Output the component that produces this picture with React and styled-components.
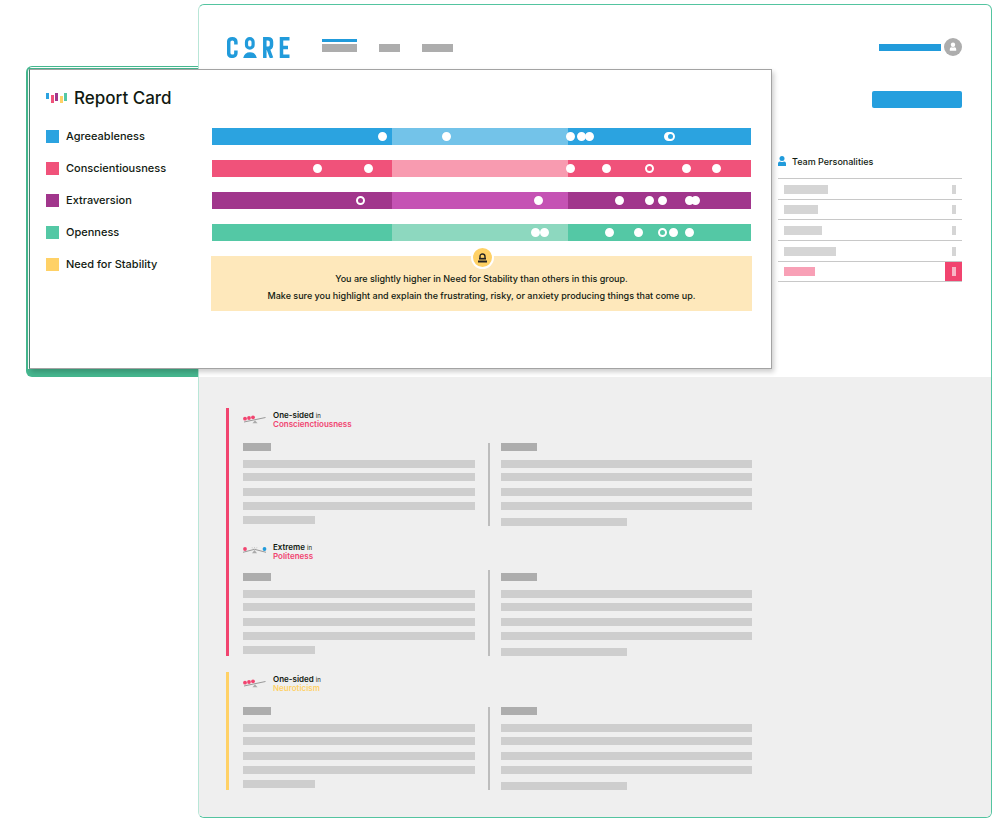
import React from "react"
import styled, { createGlobalStyle } from "styled-components"

const GlobalStyle = createGlobalStyle`
  * {
    box-sizing: border-box;
  }
  body {
    margin: 0;
    background-color: white;
    color: #111a11;
    font-family: Inter, "Liberation Sans", sans-serif;
  }
`

const Stage = styled.div`
  position: relative;
  padding: 4px 8px 14px 198px;
`

const Backing = styled.div`
  position: absolute;
  top: 66px;
  left: 26px;
  width: 190px;
  height: 311px;
  background: linear-gradient(#46b78f, #46b78f) 0 1px / 100% 1px no-repeat white;
  border: solid #46b78f;
  border-width: 1px 0 8px 2px;
  border-radius: 6px;
`

const Window = styled.div`
  position: relative;
  background-color: white;
  border: 1px solid #54c4a0;
  border-left-color: #b9e6d7;
  border-radius: 6px;
  overflow: hidden;
`

const Top = styled.div`
  min-height: 372px;
  padding: 31px 29px 0 28px;
`

const HeaderContainer = styled.header`
  display: flex;
  align-items: center;
  height: 22px;
`

const Nav = styled.nav`
  display: flex;
  gap: 22px;
  margin-left: 31px;
  padding-bottom: 3px;
`

const NavLink = styled.a`
  display: block;
  width: ${props => props.$width}px;
  height: 13px;
  border-top: 3px solid ${props => (props.$active ? "#219bdb" : "transparent")};
  background: linear-gradient(#adadad, #adadad) bottom / 100% 8px no-repeat;
`

const Account = styled.div`
  display: flex;
  align-items: center;
  gap: 3px;
  margin-left: auto;
`

const AccountLink = styled.a`
  width: 62px;
  height: 7px;
  background-color: #219bdb;
`

const Action = styled.button`
  display: block;
  width: 90px;
  height: 17px;
  margin: 33px 0 0 auto;
  padding: 0;
  border: 0;
  border-radius: 2px;
  background-color: #259fde;
`

const Team = styled.section`
  width: 184px;
  margin: 47px 0 0 auto;
`

const TeamTitle = styled.h2`
  display: flex;
  align-items: center;
  gap: 6px;
  height: 12px;
  margin: 0 0 11px;
  font-size: 9px;
  font-weight: 500;
`

const TeamList = styled.ul`
  list-style: none;
  margin: 0;
  padding: 0;
  border-bottom: 1px solid #c8c8c8;
`

const TeamRow = styled.li`
  display: flex;
  align-items: stretch;
  justify-content: space-between;
  height: 21px;
  padding-left: 6px;
  border-top: 1px solid #c8c8c8;

  &:nth-child(3n + 2) {
    height: 20px;
  }
`

const Bar = styled.span`
  display: block;
  align-self: center;
  width: ${props => props.$width}px;
  height: 9px;
  background-color: ${props => props.$color || "#d5d5d5"};
`

const Score = styled.span`
  display: flex;
  justify-content: center;
  width: 17px;
  background-color: ${props => (props.$active ? "#f1446f" : "transparent")};
`

const Card = styled.section`
  position: absolute;
  top: 69px;
  left: 29px;
  right: 228px;
  padding: 18px 19px 57px 16px;
  background-color: white;
  border: 1px solid #a3a3a3;
  border-left-color: #4a8070;
  box-shadow: 2px 3px 5px rgba(0, 0, 0, 0.2);
`

const CardTitle = styled.h1`
  display: flex;
  align-items: center;
  gap: 6px;
  height: 20px;
  margin: 0 0 12px;
  font-size: 17px;
  font-weight: 500;
`

const CardBody = styled.div`
  display: flex;
`

const Labels = styled.ul`
  list-style: none;
  width: 165px;
  margin: 0;
  padding: 0;
`

const Label = styled.li`
  display: flex;
  align-items: center;
  gap: 7px;
  height: 32px;
  font-size: 11px;
  font-weight: 500;

  &::before {
    content: "";
    width: 13px;
    height: 13px;
    background-color: ${props => props.$color};
  }
`

const Chart = styled.div`
  flex: 1;
`

const TrackRow = styled.div`
  display: flex;
  align-items: center;
  height: 32px;
  padding: 0 1px;
`

const Track = styled.div`
  position: relative;
  flex: 1;
  height: 17px;
  background: linear-gradient(
    to right,
    ${props => props.$color} 33.4%,
    ${props => props.$mid} 33.4% 66%,
    ${props => props.$color} 66%
  );
`

const Dot = styled.span`
  position: absolute;
  top: 4px;
  width: 9px;
  height: 9px;
  margin-left: -4px;
  border: 2px solid white;
  border-radius: 50%;
  background-color: ${props => props.$fill || "white"};
`

const Notice = styled.div`
  position: relative;
  margin-top: 8px;
  padding: 14px 0 7px;
  background-color: #fee8bb;
  font-size: 9px;
  font-weight: 500;
  line-height: 17px;
  text-align: center;

  p {
    margin: 0;
  }
`

const Badge = styled.span`
  position: absolute;
  top: -10px;
  left: 50%;
  display: flex;
  align-items: center;
  justify-content: center;
  width: 23px;
  height: 23px;
  margin-left: -11px;
  border: 2px solid white;
  border-radius: 50%;
  background-color: #ffd166;
`

const Details = styled.div`
  display: flex;
  flex-direction: column;
  gap: 16px;
  padding: 31px 239px 27px 27px;
  background-color: #efefef;
`

const Group = styled.section`
  display: flex;
  flex-direction: column;
  gap: 17px;
  padding: 3px 0 0 14px;
  border-left: 3px solid ${props => props.$color};
`

const TraitHeader = styled.header`
  display: flex;
  align-items: center;
  gap: 6px;
`

const TraitTitle = styled.h3`
  margin: 0;
  font-size: 8px;
  line-height: 9px;
  font-weight: 600;

  small {
    font-size: 6px;
    font-weight: 400;
  }
  span {
    display: block;
    color: ${props => props.$color};
  }
`

const Columns = styled.div`
  display: grid;
  grid-template-columns: 245fr 264fr;
  margin-top: ${props => (props.$tall ? 9 : 14)}px;

  > div {
    padding-top: ${props => (props.$tall ? 3 : 0)}px;
  }
`

const LeftColumn = styled.div`
  padding-right: 13px;
`

const RightColumn = styled.div`
  padding-left: 11px;
  border-left: 2px solid #bdbdbd;
`

const Line = styled.div`
  width: ${props => props.$width || "100%"};
  height: 8px;
  margin-top: ${props => props.$gap}px;
  background-color: ${props => (props.$head ? "#adadad" : "#cecece")};
`

const tracks = [
  { name: "Agreeableness", color: "#2ba3e0", mid: "#73c3e9", dots: [382, 446, 570, 581, 589, 668], self: 670 },
  { name: "Conscientiousness", color: "#f0527a", mid: "#f89bb0", dots: [317, 368, 570, 606, 686, 716], self: 649 },
  { name: "Extraversion", color: "#a1368c", mid: "#c553b4", dots: [538, 619, 649, 662, 689, 695], self: 360 },
  { name: "Openness", color: "#54c8a5", mid: "#8dd8bf", dots: [535, 544, 609, 638, 673, 689], self: 662 },
]

// scores run from 212 to 751 along a track
const place = score => ({ left: `${((score - 212) / 539) * 100}%` })

const Logo = () => (
  <svg width="64" height="22" viewBox="0 -1 64 22" fill="none" stroke="#219bdb" strokeWidth="3.5" role="img" aria-label="Core">
    <path d="M8.900 7.500V5Q8.900 1.700 5.300 1.700T1.700 5V16Q1.700 19.300 5.300 19.300T8.900 16V13.500" />
    <rect x="19.500" y="1.600" width="6.600" height="9.600" rx="3.300" strokeWidth="3.200" />
    <path d="M16.200 21Q17.500 15.200 23 15.200T29.800 21Z" fill="#219bdb" stroke="none" />
    <path d="M37.800 21V1.700H41Q44.500 1.700 44.500 5V8Q44.500 11.300 41 11.300H37.800M41 11.300L44.600 21" />
    <path d="M62.500 1.700H54.500V19.300H62.500M54.500 10.500H61" />
  </svg>
)

const Person = ({ size, color }) => (
  <svg width={size} height={size + 2} viewBox="0 0 8 10" fill={color} aria-hidden="true">
    <circle cx="4" cy="2.500" r="2.500" />
    <path d="M0 10V7.500Q0 5.500 2 5.500Q4 6.500 6 5.500Q8 5.500 8 7.500V10Z" />
  </svg>
)

const Avatar = () => (
  <svg width="18" height="18" viewBox="0 0 18 18" aria-hidden="true">
    <circle cx="9" cy="9" r="9" fill="#adadad" />
    <circle cx="9" cy="6.800" r="2.200" fill="white" />
    <path d="M5.800 12.800V11Q5.800 9.300 7.500 9.200Q9 10 10.500 9.200Q12.200 9.300 12.200 11V12.800Z" fill="white" />
  </svg>
)

const BarsIcon = () => (
  <svg width="22" height="10" viewBox="0 0 22 10" aria-hidden="true">
    <rect x="0" y="0" width="3" height="6" fill="#2ba3e0" />
    <rect x="5" y="2" width="3" height="8" fill="#f0527a" />
    <rect x="9" y="0" width="3" height="8" fill="#a1368c" />
    <rect x="14" y="3" width="3" height="7" fill="#ffd166" />
    <rect x="18" y="0" width="3" height="8" fill="#54c8a5" />
  </svg>
)

const StabilityIcon = () => (
  <svg width="9" height="10" viewBox="0 0 9 10" fill="none" stroke="#222" aria-hidden="true">
    <path d="M2 5V3.500Q2 1 4.500 1T7 3.500V5" strokeWidth="1.400" />
    <path d="M1 5.700H8" strokeWidth="1.700" />
    <path d="M0 8.500H9" strokeWidth="2" />
  </svg>
)

const OneSided = () => (
  <svg width="24" height="10" viewBox="0 0 24 10" aria-hidden="true">
    <path d="M1 7L22.500 2.500" stroke="#999" />
    <path d="M9.500 8.300L12 5.300L14.500 8.300Z" fill="#aaa" />
    <g fill="#f1446f">
      <circle cx="2" cy="3.700" r="1.900" />
      <circle cx="6" cy="3" r="1.900" />
      <circle cx="10" cy="2.300" r="1.900" />
    </g>
  </svg>
)

const Extreme = () => (
  <svg width="24" height="10" viewBox="0 0 24 10" aria-hidden="true">
    <path d="M0 5.300L11.500 2.300L23 5.300" stroke="#999" fill="none" />
    <path d="M9 6.300L11.500 3L14 6.300Z" fill="#aaa" />
    <path d="M11.500 0V1M9 .3L10 1.500M14 .3L13 1.500" stroke="#bbb" strokeWidth=".7" />
    <circle cx="2" cy="2" r="1.900" fill="#f1446f" />
    <circle cx="21.500" cy="2" r="1.900" fill="#219bdb" />
  </svg>
)

const Lines = ({ head, last, lastGap }) => (
  <>
    <Line $head $width={head} $gap={0} />
    <Line $gap={9} />
    <Line $gap={5} />
    <Line $gap={7} />
    <Line $gap={6} />
    <Line $width={last} $gap={lastGap} />
  </>
)

const Trait = ({ icon, kind, name, color, tall }) => (
  <article>
    <TraitHeader>
      {icon}
      <TraitTitle $color={color}>
        {kind} <small>in</small>
        <span>{name}</span>
      </TraitTitle>
    </TraitHeader>
    <Columns $tall={tall}>
      <LeftColumn>
        <Lines head="28px" last="31%" lastGap={6} />
      </LeftColumn>
      <RightColumn>
        <Lines head="36px" last="50%" lastGap={8} />
      </RightColumn>
    </Columns>
  </article>
)

const Header = () => (
  <HeaderContainer>
    <Logo />
    <Nav>
      <NavLink href="#report" aria-label="Report" $width={35} $active />
      <NavLink href="#team" aria-label="Team" $width={21} />
      <NavLink href="#settings" aria-label="Settings" $width={31} />
    </Nav>
    <Account>
      <AccountLink href="#account" aria-label="Account" />
      <Avatar />
    </Account>
  </HeaderContainer>
)

const TeamPersonalities = () => (
  <Team>
    <TeamTitle>
      <Person size={8} color="#219bdb" />
      Team Personalities
    </TeamTitle>
    <TeamList>
      {[44, 34, 38, 52].map(width => (
        <TeamRow key={width}>
          <Bar $width={width} />
          <Score><Bar $width={4} /></Score>
        </TeamRow>
      ))}
      <TeamRow>
        <Bar $width={31} $color="#f8a0b6" />
        <Score $active><Bar $width={4} $color="#f8b5c5" /></Score>
      </TeamRow>
    </TeamList>
  </Team>
)

const ReportCard = () => (
  <Card>
    <CardTitle>
      <BarsIcon />
      Report Card
    </CardTitle>
    <CardBody>
      <Labels>
        {tracks.map(track => (
          <Label key={track.name} $color={track.color}>{track.name}</Label>
        ))}
        <Label $color="#ffd166">Need for Stability</Label>
      </Labels>
      <Chart>
        {tracks.map(track => (
          <TrackRow key={track.name}>
            <Track $color={track.color} $mid={track.mid}>
              {track.dots.map(score => (
                <Dot key={score} style={place(score)} />
              ))}
              <Dot $fill={track.color} style={place(track.self)} />
            </Track>
          </TrackRow>
        ))}
        <Notice>
          <Badge><StabilityIcon /></Badge>
          <p>You are slightly higher in Need for Stability than others in this group.</p>
          <p>Make sure you highlight and explain the frustrating, risky, or anxiety producing things that come up.</p>
        </Notice>
      </Chart>
    </CardBody>
  </Card>
)

export default function App() {
  return (
    <Stage>
      <GlobalStyle />
      <Backing />
      <Window>
        <Top>
          <Header />
          <Action aria-label="Invite" />
          <TeamPersonalities />
        </Top>
        <Details>
          <Group $color="#f1446f">
            <Trait icon={<OneSided />} kind="One-sided" name="Conscienctiousness" color="#f1446f" />
            <Trait icon={<Extreme />} kind="Extreme" name="Politeness" color="#f1446f" tall />
          </Group>
          <Group $color="#ffd166">
            <Trait icon={<OneSided />} kind="One-sided" name="Neuroticism" color="#ffd166" />
          </Group>
        </Details>
      </Window>
      <ReportCard />
    </Stage>
  )
}
